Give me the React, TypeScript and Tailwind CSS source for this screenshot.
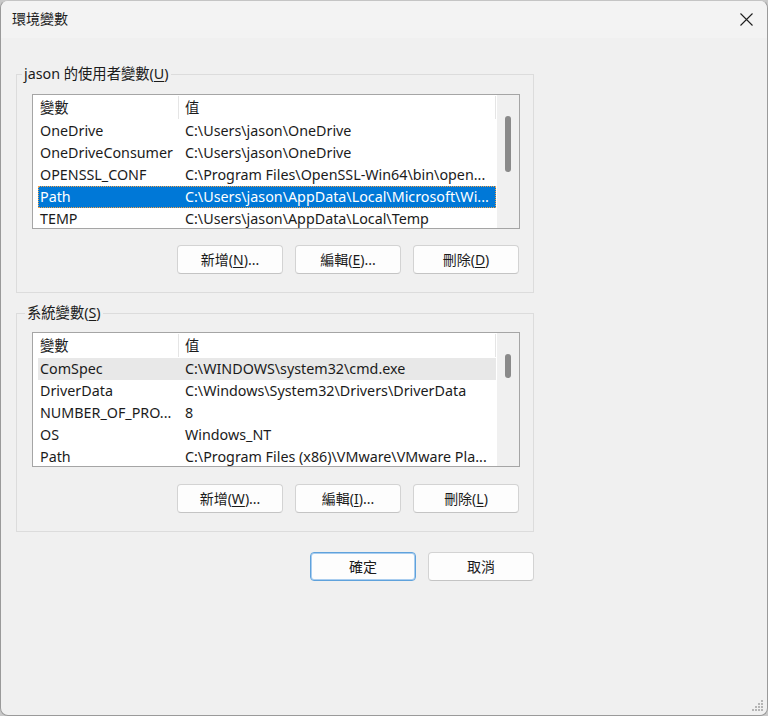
import React from "react";

type Row = { name: string; value: string; selected?: boolean; hover?: boolean };

const userRows: Row[] = [
  { name: "OneDrive", value: "C:\\Users\\jason\\OneDrive" },
  { name: "OneDriveConsumer", value: "C:\\Users\\jason\\OneDrive" },
  { name: "OPENSSL_CONF", value: "C:\\Program Files\\OpenSSL-Win64\\bin\\open..." },
  { name: "Path", value: "C:\\Users\\jason\\AppData\\Local\\Microsoft\\Wi...", selected: true },
  { name: "TEMP", value: "C:\\Users\\jason\\AppData\\Local\\Temp" },
];

const sysRows: Row[] = [
  { name: "ComSpec", value: "C:\\WINDOWS\\system32\\cmd.exe", hover: true },
  { name: "DriverData", value: "C:\\Windows\\System32\\Drivers\\DriverData" },
  { name: "NUMBER_OF_PRO...", value: "8" },
  { name: "OS", value: "Windows_NT" },
  { name: "Path", value: "C:\\Program Files (x86)\\VMware\\VMware Pla..." },
];

function Btn({ children, primary }: { children: React.ReactNode; primary?: boolean }) {
  return (
    <div
      className={
        "w-[106px] h-[29px] flex items-center justify-center rounded-[4px] bg-[#fdfdfd] text-[14px] text-[#1b1b1b] " +
        (primary
          ? "border border-[#5fa2dc] shadow-[inset_0_0_0_1px_#a9cdef]"
          : "border border-[#d3d3d3] border-b-[#c4c4c4]")
      }
    >
      {children}
    </div>
  );
}

function U({ c }: { c: string }) {
  return <span className="underline underline-offset-2 decoration-1">{c}</span>;
}

function List({ rows, thumbH }: { rows: Row[]; thumbH: number }) {
  return (
    <div className="h-[135px] border border-[#a5a5a5] bg-white flex overflow-hidden">
      <div className="w-[464px] flex flex-col">
        <div className="h-[25px] flex items-stretch shrink-0">
          <div className="w-[145px] pl-[7px] flex items-center">變數</div>
          <div className="w-[318px] border-l border-r border-[#e5e5e5] pl-[6px] flex items-center my-[1px]">值</div>
        </div>
        {rows.map((r, i) => (
          <div
            key={i}
            className={
              "ml-[5px] w-[458px] h-[22px] shrink-0 flex items-center " +
              (r.selected
                ? "bg-[#0078d7] text-white outline outline-1 outline-dotted outline-[#f3a24a] -outline-offset-1"
                : r.hover
                ? "bg-[#e8e8e8]"
                : "")
            }
          >
            <div className="w-[140px] pl-[2px] whitespace-nowrap overflow-hidden text-ellipsis">{r.name}</div>
            <div className="flex-1 pl-[7px] whitespace-nowrap overflow-hidden text-ellipsis">{r.value}</div>
          </div>
        ))}
      </div>
      <div className="w-[22px] bg-[#f0f0f0] pt-[21px] pl-[8px]">
        <div className="w-[6px] rounded-[3px] bg-[#8a8a8a]" style={{ height: thumbH }} />
      </div>
    </div>
  );
}

export default function App() {
  return (
    <div className="w-[768px] h-[716px] bg-[#c9c9c9] font-['Noto_Sans','Noto_Sans_CJK_TC',sans-serif] text-[14.3px] text-[#1b1b1b]">
      <div className="w-[768px] h-[716px] rounded-[8px] border border-[#9a9a9a] border-t-[#c4c4c4] bg-[#f0f0f0] flex flex-col overflow-hidden">
        {/* title bar */}
        <div className="h-[37px] shrink-0 bg-[#f3f3f3] flex items-center pl-[11px] pr-[14px]">
          <div className="flex-1 text-[14px] leading-none -mt-[1px]">環境變數</div>
          <svg width="13" height="13" viewBox="0 0 13 13" className="-mt-[1px]">
            <path d="M0.5 0.5 L12.5 12.5 M12.5 0.5 L0.5 12.5" stroke="#1f1f1f" strokeWidth="1.1" />
          </svg>
        </div>

        <div className="pl-[15px] flex flex-col">
          {/* user vars */}
          <fieldset className="mt-[26px] w-[518px] border border-[#dcdcdc] pl-[15px] pr-[13px] pb-[18px]">
            <legend className="-ml-[10px] px-[2px] leading-[20px]">
              jason 的使用者變數(<U c="U" />)
            </legend>
            <div className="mt-[10px]">
              <List rows={userRows} thumbH={56} />
            </div>
            <div className="mt-[16px] flex justify-end gap-[12px] pr-[1px]">
              <Btn>
                新增(<U c="N" />)...
              </Btn>
              <Btn>
                編輯(<U c="E" />)...
              </Btn>
              <Btn>
                刪除(<U c="D" />)
              </Btn>
            </div>
          </fieldset>

          {/* system vars */}
          <fieldset className="mt-[10px] w-[518px] border border-[#dcdcdc] pl-[15px] pr-[13px] pb-[18px]">
            <legend className="-ml-[7px] px-[2px] leading-[20px]">
              系統變數(<U c="S" />)
            </legend>
            <div className="mt-[9px]">
              <List rows={sysRows} thumbH={24} />
            </div>
            <div className="mt-[17px] flex justify-end gap-[12px] pr-[1px]">
              <Btn>
                新增(<U c="W" />)...
              </Btn>
              <Btn>
                編輯(<U c="I" />)...
              </Btn>
              <Btn>
                刪除(<U c="L" />)
              </Btn>
            </div>
          </fieldset>

          <div className="w-[518px] mt-[20px] flex justify-end gap-[12px]">
            <Btn primary>確定</Btn>
            <Btn>取消</Btn>
          </div>
        </div>

        <div className="flex-1" />
        <div className="flex justify-end pr-[3px] pb-[3px]">
          <svg width="12" height="12" viewBox="0 0 12 12">
            <g fill="#b5b5b5">
              <rect x="9" y="0" width="2" height="2" />
              <rect x="6" y="3" width="2" height="2" />
              <rect x="9" y="3" width="2" height="2" />
              <rect x="3" y="6" width="2" height="2" />
              <rect x="6" y="6" width="2" height="2" />
              <rect x="9" y="6" width="2" height="2" />
              <rect x="0" y="9" width="2" height="2" />
              <rect x="3" y="9" width="2" height="2" />
              <rect x="6" y="9" width="2" height="2" />
              <rect x="9" y="9" width="2" height="2" />
            </g>
          </svg>
        </div>
      </div>
    </div>
  );
}
